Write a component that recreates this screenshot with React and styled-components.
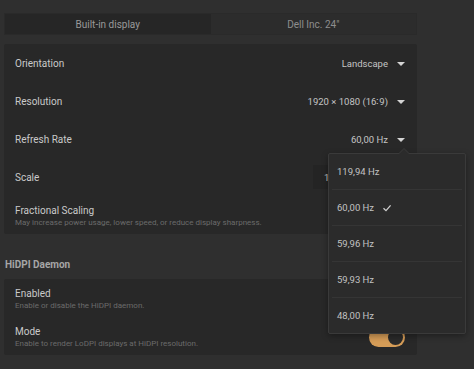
import React from 'react';
import styled, { createGlobalStyle } from 'styled-components';

const Global = createGlobalStyle`
  body {
    margin: 0;
    background: #2f2f2f;
    font-family: Roboto, "Noto Sans", sans-serif;
    color: #c9c9c9;
  }
`;

const Page = styled.div`
  position: relative;
  width: 474px;
  height: 369px;
  overflow: hidden;
  padding: 13px 0 0 4px;
  box-sizing: border-box;
`;

const Column = styled.div`
  width: 413px;
  display: flex;
  flex-direction: column;
`;

const TabBar = styled.div`
  display: grid;
  grid-template-columns: 1fr 1fr;
  height: 22px;
  border: 1px solid #2a2a2a;
  box-sizing: border-box;
`;

const Tab = styled.div`
  display: flex;
  align-items: center;
  justify-content: center;
  font-size: 10px;
  color: ${p => (p.active ? '#9a9a9a' : '#8e8e8e')};
  background: ${p => (p.active ? '#262626' : '#2c2c2c')};
`;

const Panel = styled.div`
  margin-top: ${p => p.top || 0}px;
  background: #282828;
  border-radius: 2px;
  display: flex;
  flex-direction: column;
`;

const Row = styled.div`
  height: 38px;
  display: flex;
  align-items: center;
  justify-content: space-between;
  padding: 0 12px 0 11px;
`;

const Labels = styled.div`
  display: flex;
  flex-direction: column;
  gap: 2px;
  margin-top: 2px;
`;

const Title = styled.div`
  font-size: 10px;
  color: #cacaca;
`;

const Sub = styled.div`
  font-size: 8px;
  color: #6b6b6b;
`;

const Value = styled.div`
  display: flex;
  align-items: center;
  gap: 9px;
  font-size: 9.5px;
  color: #c4c4c4;
`;

const Caret = styled.span`
  width: 0;
  height: 0;
  border-left: 4px solid transparent;
  border-right: 4px solid transparent;
  border-top: 4px solid #d4d4d4;
  margin-top: 1px;
`;

/* the combo is mostly hidden under the open popover; clip it where the popover begins */
const ScaleBox = styled.div`
  width: 16px;
  height: 24px;
  margin-right: 76px;
  background: #242424;
  display: flex;
  align-items: center;
  padding-left: 11px;
  box-sizing: border-box;
  overflow: hidden;
  white-space: nowrap;
  font-size: 9.5px;
  color: #c4c4c4;
`;

const Heading = styled.div`
  margin-top: 25px;
  margin-bottom: 9px;
  font-size: 10px;
  font-weight: bold;
  color: #a6a6a6;
  padding-left: 1px;
`;

const Toggle = styled.div`
  width: 36px;
  height: 19px;
  margin-top: 3px;
  border-radius: 10px;
  background: ${p => (p.on ? '#d59c57' : '#555')};
  display: flex;
  align-items: center;
  justify-content: ${p => (p.on ? 'flex-end' : 'flex-start')};
  padding: 0 2px;
  box-sizing: border-box;
`;

const Knob = styled.div`
  width: 15px;
  height: 15px;
  border-radius: 50%;
  background: #2a2a2a;
`;

const Popover = styled.div`
  position: absolute;
  left: 328px;
  top: 153px;
  width: 138px;
  background: #2b2b2b;
  border: 1px solid #3a3a3a;
  border-radius: 2px;
  box-sizing: border-box;
  box-shadow: 0 2px 6px rgba(0, 0, 0, 0.35);
  &::before {
    content: '';
    position: absolute;
    top: -6px;
    left: 69px;
    border-left: 6px solid transparent;
    border-right: 6px solid transparent;
    border-bottom: 6px solid #3a3a3a;
  }
  &::after {
    content: '';
    position: absolute;
    top: -5px;
    left: 70px;
    border-left: 5px solid transparent;
    border-right: 5px solid transparent;
    border-bottom: 5px solid #2b2b2b;
  }
`;

const Option = styled.div`
  height: 35px;
  margin: 0 3px;
  padding-left: 5px;
  display: flex;
  align-items: center;
  gap: 8px;
  font-size: 9.5px;
  color: #c2c2c2;
  border-top: ${p => (p.first ? 'none' : '1px solid #353535')};
`;

const rates = ['119,94 Hz', '60,00 Hz', '59,96 Hz', '59,93 Hz', '48,00 Hz'];

function Check() {
  return (
    <svg width="10" height="10" viewBox="0 0 10 10">
      <path d="M1.5 5.2 L4 7.6 L8.6 2.4" fill="none" stroke="#d0d0d0" strokeWidth="1.3" />
    </svg>
  );
}

export default function App() {
  return (
    <Page>
      <Global />
      <Column>
        <TabBar>
          <Tab active>Built-in display</Tab>
          <Tab>Dell Inc. 24"</Tab>
        </TabBar>
        <Panel top={9}>
          <Row>
            <Title>Orientation</Title>
            <Value>Landscape<Caret /></Value>
          </Row>
          <Row>
            <Title>Resolution</Title>
            <Value>1920 × 1080 (16∶9)<Caret /></Value>
          </Row>
          <Row>
            <Title>Refresh Rate</Title>
            <Value>60,00 Hz<Caret /></Value>
          </Row>
          <Row>
            <Title>Scale</Title>
            <ScaleBox>100 %</ScaleBox>
          </Row>
          <Row>
            <Labels>
              <Title>Fractional Scaling</Title>
              <Sub>May increase power usage, lower speed, or reduce display sharpness.</Sub>
            </Labels>
          </Row>
        </Panel>
        <Heading>HiDPI Daemon</Heading>
        <Panel>
          <Row>
            <Labels>
              <Title>Enabled</Title>
              <Sub>Enable or disable the HiDPI daemon.</Sub>
            </Labels>
            <Toggle on><Knob /></Toggle>
          </Row>
          <Row>
            <Labels>
              <Title>Mode</Title>
              <Sub>Enable to render LoDPI displays at HiDPI resolution.</Sub>
            </Labels>
            <Toggle on><Knob /></Toggle>
          </Row>
        </Panel>
      </Column>
      <Popover>
        {rates.map((r, i) => (
          <Option key={r} first={i === 0}>
            {r}
            {r === '60,00 Hz' && <Check />}
          </Option>
        ))}
      </Popover>
    </Page>
  );
}
